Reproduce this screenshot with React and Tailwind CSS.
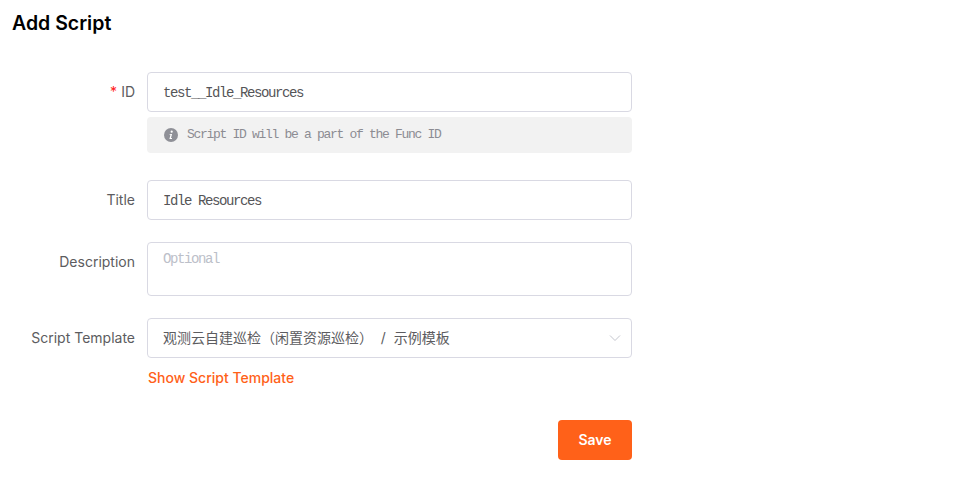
import React from 'react';

const sans = 'font-["Inter","Noto_Sans_CJK_SC",sans-serif]';
const inputCls = 'block w-full h-10 rounded-[4px] border border-[#d9d9e3] bg-white px-[15px] pt-px font-["Liberation_Mono",monospace] text-sm tracking-[-1.4px] text-[#555558] outline-none';

function Row({ label, required, children, className = '' }) {
  return (
    <div className={`flex gap-3 ${className}`}>
      <label className="w-[135px] shrink-0 text-right text-sm leading-10 text-[#5c5c60]">
        {required && <span className="mr-1 text-[#ff2020]">*</span>}
        {label}
      </label>
      <div className="w-[485px]">{children}</div>
    </div>
  );
}

export default function App() {
  return (
    <div className={`h-[492px] w-[972px] overflow-hidden bg-white ${sans}`}>
      <h1 className="pl-3 pt-[11px] text-[19.5px] font-semibold leading-6 text-black">Add Script</h1>

      <form className="mt-[37px] flex flex-col">
        <Row label="ID" required>
          <input className={inputCls} value="test__Idle_Resources" readOnly />
          <div className="mt-[5px] flex h-9 items-center gap-[9px] rounded-[4px] bg-[#f2f2f2] pl-[17px] font-['Liberation_Mono',monospace] text-[13px] tracking-[-1.3px] text-[#8c8c92]">
            <svg width="14" height="14" viewBox="0 0 14 14" className="shrink-0">
              <circle cx="7" cy="7" r="7" fill="#8f9097" />
              <circle cx="7.7" cy="3.7" r="1.1" fill="#fff" />
              <path d="M5.6 6h2.5L7 10.1h1v.8H5.4L6.5 6.8h-.9z" fill="#fff" />
            </svg>
            Script ID will be a part of the Func ID
          </div>
        </Row>

        <Row label="Title" className="mt-[27px]">
          <input className={inputCls} value="Idle Resources" readOnly />
        </Row>

        <Row label="Description" className="mt-[22px]">
          <textarea
            className={`${inputCls} !h-[54px] resize-none !pt-[6px] pb-[5px] leading-5 placeholder:text-[#bcc0c9]`}
            placeholder="Optional"
            readOnly
          />
        </Row>

        <Row label="Script Template" className="mt-[22px]">
          <div className="flex h-10 items-center justify-between rounded-[4px] border border-[#d9d9e3] bg-white pl-[15px] pr-[10px] text-sm text-[#5c5c60]">
            <span className="whitespace-pre">观测云自建巡检（闲置资源巡检）  /  示例模板</span>
            <svg width="12" height="8" viewBox="0 0 12 8" fill="none" stroke="#c4c6ce" strokeWidth="1">
              <path d="M1 1.5l5 5 5-5" />
            </svg>
          </div>
          <a className="mt-2 ml-px block text-sm font-medium leading-6 text-[#ff6119]">Show Script Template</a>
        </Row>

        <div className="mt-[30px] flex w-[632px] justify-end">
          <button type="button" className="h-10 w-[74px] rounded-[4px] bg-[#ff6119] text-sm font-semibold text-white">
            Save
          </button>
        </div>
      </form>
    </div>
  );
}
